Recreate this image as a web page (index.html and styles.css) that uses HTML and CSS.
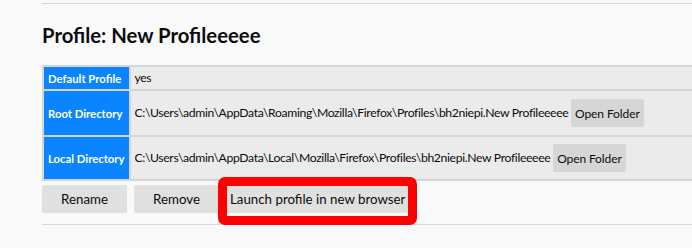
FILE: index.html
```html
<!DOCTYPE html>
<html>
<head>
<meta charset="utf-8">
<link rel="stylesheet" href="styles.css">
</head>
<body>
<div class="page">
  <div class="rule rule-top"></div>
  <h1 class="title">Profile: New Profileeeee</h1>
  <table class="info">
    <tr class="row-short">
      <th>Default Profile</th>
      <td>yes</td>
    </tr>
    <tr class="row-root">
      <th>Root Directory</th>
      <td>C:\Users\admin\AppData\Roaming\Mozilla\Firefox\Profiles\bh2niepi.New Profileeeee <button class="open">Open Folder</button></td>
    </tr>
    <tr>
      <th>Local Directory</th>
      <td>C:\Users\admin\AppData\Local\Mozilla\Firefox\Profiles\bh2niepi.New Profileeeee <button class="open">Open Folder</button></td>
    </tr>
  </table>
  <div class="actions">
    <button class="btn">Rename</button>
    <button class="btn">Remove</button>
    <span class="highlight"><button class="btn btn-launch">Launch profile in new browser</button></span>
  </div>
  <div class="rule rule-bottom"></div>
</div>
</body>
</html>
```
FILE: styles.css
```css
html, body {
  margin: 0;
  padding: 0;
  background: #f9f9f9;
  overflow: hidden;
}
body {
  font-family: Lato, "Noto Sans", sans-serif;
  color: #0c0c0d;
}
.page {
  padding-left: 42px;
  width: 700px;
}
.rule {
  height: 1px;
  background: #d7d7d7;
}
.rule-top {
  margin-top: 3px;
}
.title {
  margin: 0;
  padding: 17px 0 16px;
  font-size: 20.3px;
  line-height: 28px;
  font-weight: 700;
}
.info {
  border-collapse: separate;
  border-spacing: 2px;
  background: #d5d5d5;
  width: 700px;
  font-size: 12.2px;
  letter-spacing: -0.35px;
}
.info th {
  background: #0a84ff;
  color: #fff;
  font-weight: 700;
  font-size: 11.3px;
  letter-spacing: 0;
  padding: 0 4px;
  text-align: left;
  white-space: nowrap;
  width: 76px;
}
.info td {
  background: #ebebeb;
  padding: 7px 4px;
  white-space: nowrap;
  line-height: 28px;
}
.info .row-root td {
  padding: 8px 4px;
}
.info .row-short td {
  padding: 0 4px;
  line-height: 22px;
  height: 22px;
}
.open {
  font-family: inherit;
  font-size: 12px;
  letter-spacing: -0.1px;
  color: inherit;
  background: #d6d6d6;
  border: none;
  border-radius: 2px;
  height: 28px;
  padding: 0 4px;
  margin: 0;
  vertical-align: top;
}
.actions {
  display: flex;
  gap: 7px;
  margin-top: 4px;
  margin-bottom: 11px;
}
.btn {
  font-family: inherit;
  font-size: 13.3px;
  color: #0c0c0d;
  background: #e0e0e0;
  border: none;
  border-radius: 2px;
  height: 28px;
  min-width: 85px;
  padding: 0 4px;
  margin: 0;
}
.highlight {
  position: relative;
  display: inline-block;
}
.highlight::after {
  content: "";
  position: absolute;
  left: -8px;
  right: -8px;
  top: -8px;
  bottom: -12px;
  border: 9px solid #ff0000;
  border-radius: 7px;
  pointer-events: none;
}
```
